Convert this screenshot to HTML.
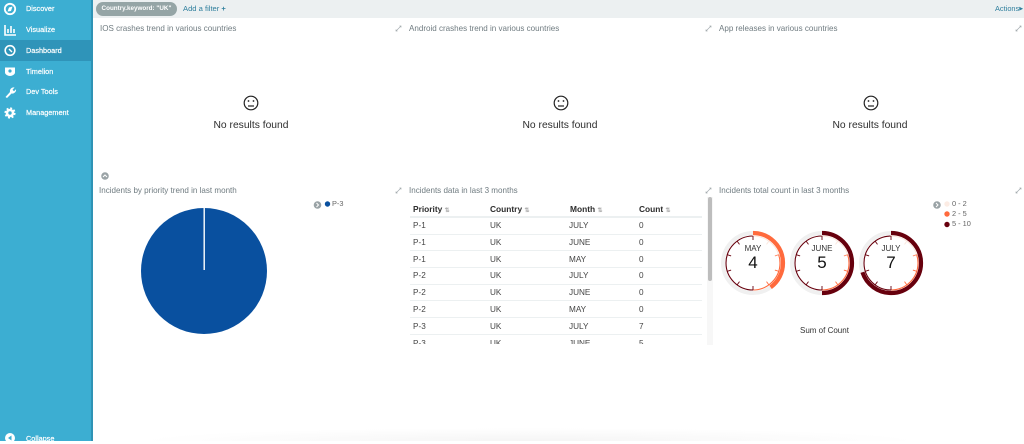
<!DOCTYPE html>
<html><head><meta charset="utf-8">
<style>
html,body{margin:0;padding:0;width:1024px;height:441px;overflow:hidden;background:#fff;font-family:"Liberation Sans",sans-serif}
.a{position:absolute;white-space:nowrap}
#side{position:absolute;left:0;top:0;width:91px;height:441px;background:#3caed2;border-right:2px solid #2f93b5}
#act{position:absolute;left:0;top:40px;width:91px;height:21px;background:#2f94b9}
.nav{position:absolute;left:26px;color:#fff;font-size:7.3px;line-height:10px;-webkit-text-stroke:.2px #fff;white-space:nowrap}
#top{position:absolute;left:93px;top:0;width:931px;height:18px;background:#ecf0f1}
#pill{position:absolute;left:96px;top:2px;width:81px;height:14px;border-radius:7px;background:#95a5a6;color:#fff;font-size:6.3px;font-weight:bold;line-height:14px;text-align:center;white-space:nowrap}
.t{position:absolute;color:#6f7b80;font-size:8.05px;line-height:10px;white-space:nowrap}
.nr{position:absolute;width:160px;text-align:center;color:#2d2d2d;font-size:10.3px;line-height:13px}
.h{position:absolute;font-size:8.4px;font-weight:bold;color:#2d2d2d;line-height:10px;white-space:nowrap}
.c{position:absolute;font-size:8.2px;color:#444;line-height:10px;white-space:nowrap}
.l{position:absolute;left:410px;width:292px;height:1px;background:#ecf0f1}
#clip{position:absolute;left:400px;top:197px;width:306px;height:147px;overflow:hidden}
svg{position:absolute;overflow:visible}
</style></head><body>
<div id="side"></div><div id="act"></div>
<svg style="left:0;top:0" width="24" height="125" viewBox="0 0 24 125">
<circle cx="10" cy="9" r="5.2" fill="none" stroke="#fff" stroke-width="1.800"/><path d="M12.500 6.500 L11 11 L7.500 11.500 L9 7.500Z" fill="#fff"/>
<path d="M5 25V35H16M8 29V33M11 26V33M14 29V33" fill="none" stroke="#fff" stroke-width="1.600"/>
<circle cx="10" cy="50.500" r="4.800" fill="none" stroke="#fff" stroke-width="1.600"/><path d="M9 49L12 52" stroke="#fff" stroke-width="1.400"/>
<path d="M5 67.500H15V72.500C15 74.500 12 76 10 76C8 76 5 74.500 5 72.500Z" fill="#fff"/><circle cx="10" cy="71" r="1.600" fill="#3caed2"/>
<path d="M5.500 97L10 92C9.500 89.500 11.500 87 14.500 87.500L12.500 89.800L14 91.300L16 89.300C16.500 92 14 94 11.500 93.500L7 98Z" fill="#fff"/>
<circle cx="10" cy="113" r="3" fill="none" stroke="#fff" stroke-width="2.600"/><circle cx="10" cy="113" r="4.800" fill="none" stroke="#fff" stroke-width="1.600" stroke-dasharray="2 1.770"/>
</svg>
<div class="nav" style="top:4px">Discover</div>
<div class="nav" style="top:25px">Visualize</div>
<div class="nav" style="top:46px">Dashboard</div>
<div class="nav" style="top:67px">Timelion</div>
<div class="nav" style="top:87px">Dev Tools</div>
<div class="nav" style="top:108px">Management</div>
<svg style="left:0;top:430px" width="20" height="11"><circle cx="10" cy="8" r="5" fill="#fff"/><path d="M11.500 5.500V10.500L8 8Z" fill="#3caed2"/></svg>
<div class="nav" style="top:434px">Collapse</div>

<div id="top"></div>
<div id="pill">Country.keyword: "UK"</div>
<div class="a" style="left:183px;top:4px;font-size:7.6px;line-height:10px;color:#2f7f9d">Add a filter <b>+</b></div>
<div class="a" style="left:995px;top:4px;font-size:7.4px;line-height:10px;color:#2f7f9d">Actions<span style="font-size:5px;vertical-align:1px">&#9654;</span></div>

<div class="t" style="left:100px;top:24px">IOS crashes trend in various countries</div>
<div class="t" style="left:409px;top:24px">Android crashes trend in various countries</div>
<div class="t" style="left:719px;top:24px">App releases in various countries</div>
<div class="t" style="left:99px;top:186px">Incidents by priority trend in last month</div>
<div class="t" style="left:409px;top:186px">Incidents data in last 3 months</div>
<div class="t" style="left:719px;top:186px">Incidents total count in last 3 months</div>

<svg style="left:0;top:0" width="1024" height="200" fill="none" stroke="#a2aaad" stroke-width=".7">
<path d="M396 31L401 26M396 29.500V31H397.500M399.500 26H401V27.500"/>
<path d="M706 31L711 26M706 29.500V31H707.500M709.500 26H711V27.500"/>
<path d="M1016 31L1021 26M1016 29.500V31H1017.500M1019.500 26H1021V27.500"/>
<path d="M396 193L401 188M396 191.500V193H397.500M399.500 188H401V189.500"/>
<path d="M706 193L711 188M706 191.500V193H707.500M709.500 188H711V189.500"/>
<path d="M1016 193L1021 188M1016 191.500V193H1017.500M1019.500 188H1021V189.500"/>
</svg>

<svg style="left:0;top:90px" width="1024" height="30" fill="none" stroke="#222" stroke-width="1.200">
<g><circle cx="251" cy="13" r="6.800"/><circle cx="248.500" cy="11" r=".9" fill="#222" stroke="none"/><circle cx="253.500" cy="11" r=".9" fill="#222" stroke="none"/><path d="M248 16H254"/></g>
<g><circle cx="561" cy="13" r="6.800"/><circle cx="558.500" cy="11" r=".9" fill="#222" stroke="none"/><circle cx="563.500" cy="11" r=".9" fill="#222" stroke="none"/><path d="M558 16H564"/></g>
<g><circle cx="871" cy="13" r="6.800"/><circle cx="868.500" cy="11" r=".9" fill="#222" stroke="none"/><circle cx="873.500" cy="11" r=".9" fill="#222" stroke="none"/><path d="M868 16H874"/></g>
</svg>
<div class="nr" style="left:171px;top:119px">No results found</div>
<div class="nr" style="left:480px;top:119px">No results found</div>
<div class="nr" style="left:790px;top:119px">No results found</div>

<svg style="left:100px;top:171px" width="10" height="10"><circle cx="5" cy="5" r="3.800" fill="#9aa3a6"/><path d="M3 6L5 4L7 6" fill="none" stroke="#fff" stroke-width="1"/></svg>

<svg style="left:130px;top:200px" width="150" height="140"><circle cx="74" cy="71" r="63" fill="#09509f"/><rect x="73.500" y="8" width="1.400" height="62" fill="#fff"/></svg>
<svg style="left:312px;top:200px" width="22" height="10"><circle cx="5.500" cy="5" r="3.800" fill="#9aa3a6"/><path d="M4.500 3L6.500 5L4.500 7" fill="none" stroke="#fff"/><circle cx="15.500" cy="4" r="2.700" fill="#09509f"/></svg>
<div class="c" style="left:332px;top:199px;font-size:7.400px;color:#666">P-3</div>

<div class="h" style="left:413px;top:204px">Priority <span style="color:#aaa;font-size:6px">&#8645;</span></div>
<div class="h" style="left:490px;top:204px">Country <span style="color:#aaa;font-size:6px">&#8645;</span></div>
<div class="h" style="left:570px;top:204px">Month <span style="color:#aaa;font-size:6px">&#8645;</span></div>
<div class="h" style="left:639px;top:204px">Count <span style="color:#aaa;font-size:6px">&#8645;</span></div>
<div class="l" style="top:216px;height:2px"></div>
<div class="l" style="top:234px"></div><div class="l" style="top:250px"></div><div class="l" style="top:267px"></div><div class="l" style="top:284px"></div><div class="l" style="top:300px"></div><div class="l" style="top:317px"></div><div class="l" style="top:334px"></div>
<div id="clip">
<div class="c" style="left:13px;top:24px">P-1</div><div class="c" style="left:90px;top:24px">UK</div><div class="c" style="left:169px;top:24px">JULY</div><div class="c" style="left:239px;top:24px">0</div>
<div class="c" style="left:13px;top:41px">P-1</div><div class="c" style="left:90px;top:41px">UK</div><div class="c" style="left:169px;top:41px">JUNE</div><div class="c" style="left:239px;top:41px">0</div>
<div class="c" style="left:13px;top:58px">P-1</div><div class="c" style="left:90px;top:58px">UK</div><div class="c" style="left:169px;top:58px">MAY</div><div class="c" style="left:239px;top:58px">0</div>
<div class="c" style="left:13px;top:74px">P-2</div><div class="c" style="left:90px;top:74px">UK</div><div class="c" style="left:169px;top:74px">JULY</div><div class="c" style="left:239px;top:74px">0</div>
<div class="c" style="left:13px;top:91px">P-2</div><div class="c" style="left:90px;top:91px">UK</div><div class="c" style="left:169px;top:91px">JUNE</div><div class="c" style="left:239px;top:91px">0</div>
<div class="c" style="left:13px;top:108px">P-2</div><div class="c" style="left:90px;top:108px">UK</div><div class="c" style="left:169px;top:108px">MAY</div><div class="c" style="left:239px;top:108px">0</div>
<div class="c" style="left:13px;top:125px">P-3</div><div class="c" style="left:90px;top:125px">UK</div><div class="c" style="left:169px;top:125px">JULY</div><div class="c" style="left:239px;top:125px">7</div>
<div class="c" style="left:13px;top:142px">P-3</div><div class="c" style="left:90px;top:142px">UK</div><div class="c" style="left:169px;top:142px">JUNE</div><div class="c" style="left:239px;top:142px">5</div>
</div>
<div class="a" style="left:707px;top:197px;width:6px;height:148px;background:#f7f7f7"></div>
<div class="a" style="left:708px;top:197px;width:4px;height:84px;background:#bdbdbd;border-radius:2px"></div>

<svg style="left:700px;top:200px" width="260" height="110" viewBox="700 200 260 110">
<defs>
<g id="base" fill="none">
<circle r="30" stroke="#f0f0f0" stroke-width="4"/>
<circle r="27" stroke="#fbe6dc" stroke-width="1" pathLength="10" transform="rotate(-90)" stroke-dasharray="2 8"/>
<circle r="27" stroke="#ff6a3d" stroke-width="1.100" pathLength="10" transform="rotate(-90)" stroke-dasharray="3 7" stroke-dashoffset="-2"/>
<circle r="27" stroke="#67000d" stroke-width="1.100" pathLength="10" transform="rotate(-90)" stroke-dasharray="5 5" stroke-dashoffset="-5"/>
<g stroke-width=".9">
<path stroke="#fbe6dc" d="M0-27V-23" transform="rotate(36)"/>
<path stroke="#ff8a65" d="M0-27V-23" transform="rotate(72)"/>
<path stroke="#ff6a3d" d="M0-27V-23" transform="rotate(108)"/>
<path stroke="#ff6a3d" d="M0-27V-23" transform="rotate(144)"/>
<path stroke="#67000d" d="M0-27V-23" transform="rotate(180)"/>
<path stroke="#67000d" d="M0-27V-23" transform="rotate(216)"/>
<path stroke="#67000d" d="M0-27V-23" transform="rotate(252)"/>
<path stroke="#67000d" d="M0-27V-23" transform="rotate(288)"/>
<path stroke="#67000d" d="M0-27V-23" transform="rotate(324)"/>
<path stroke="#67000d" d="M0-27V-23"/>
</g>
</g>
</defs>
<g transform="translate(753 263)"><use href="#base"/><circle r="30" fill="none" stroke="#ff6a3d" stroke-width="4.200" pathLength="10" stroke-dasharray="4 6" transform="rotate(-90)"/></g>
<g transform="translate(822 263)"><use href="#base"/><circle r="30" fill="none" stroke="#67000d" stroke-width="4.200" pathLength="10" stroke-dasharray="5 5" transform="rotate(-90)"/></g>
<g transform="translate(891 263)"><use href="#base"/><circle r="30" fill="none" stroke="#67000d" stroke-width="4.200" pathLength="10" stroke-dasharray="7 3" transform="rotate(-90)"/></g>
<text x="753" y="251" text-anchor="middle" font-size="8" fill="#333" font-family="Liberation Sans">MAY</text>
<text x="822" y="251" text-anchor="middle" font-size="8" fill="#333" font-family="Liberation Sans">JUNE</text>
<text x="891" y="251" text-anchor="middle" font-size="8" fill="#333" font-family="Liberation Sans">JULY</text>
<text x="753" y="268" text-anchor="middle" font-size="17" fill="#111" font-family="Liberation Sans">4</text>
<text x="822" y="268" text-anchor="middle" font-size="17" fill="#111" font-family="Liberation Sans">5</text>
<text x="891" y="268" text-anchor="middle" font-size="17" fill="#111" font-family="Liberation Sans">7</text>
<circle cx="937" cy="205" r="3.800" fill="#9aa3a6"/><path d="M936 203L938 205L936 207" fill="none" stroke="#fff"/>
<circle cx="947" cy="204" r="2.700" fill="#fcece4"/><circle cx="947" cy="214" r="2.700" fill="#ff6a3d"/><circle cx="947" cy="224.500" r="2.700" fill="#67000d"/>
</svg>
<div class="c" style="left:952px;top:199px;font-size:7.400px;color:#666">0 - 2</div>
<div class="c" style="left:952px;top:209px;font-size:7.400px;color:#666">2 - 5</div>
<div class="c" style="left:952px;top:219px;font-size:7.400px;color:#666">5 - 10</div>
<div class="c" style="left:800px;top:326px;font-size:8px;color:#333">Sum of Count</div>

<div class="a" style="left:140px;top:428px;width:780px;height:13px;background:radial-gradient(ellipse 50% 100% at 50% 100%,#f5f5f5,#fff)"></div>
</body></html>
